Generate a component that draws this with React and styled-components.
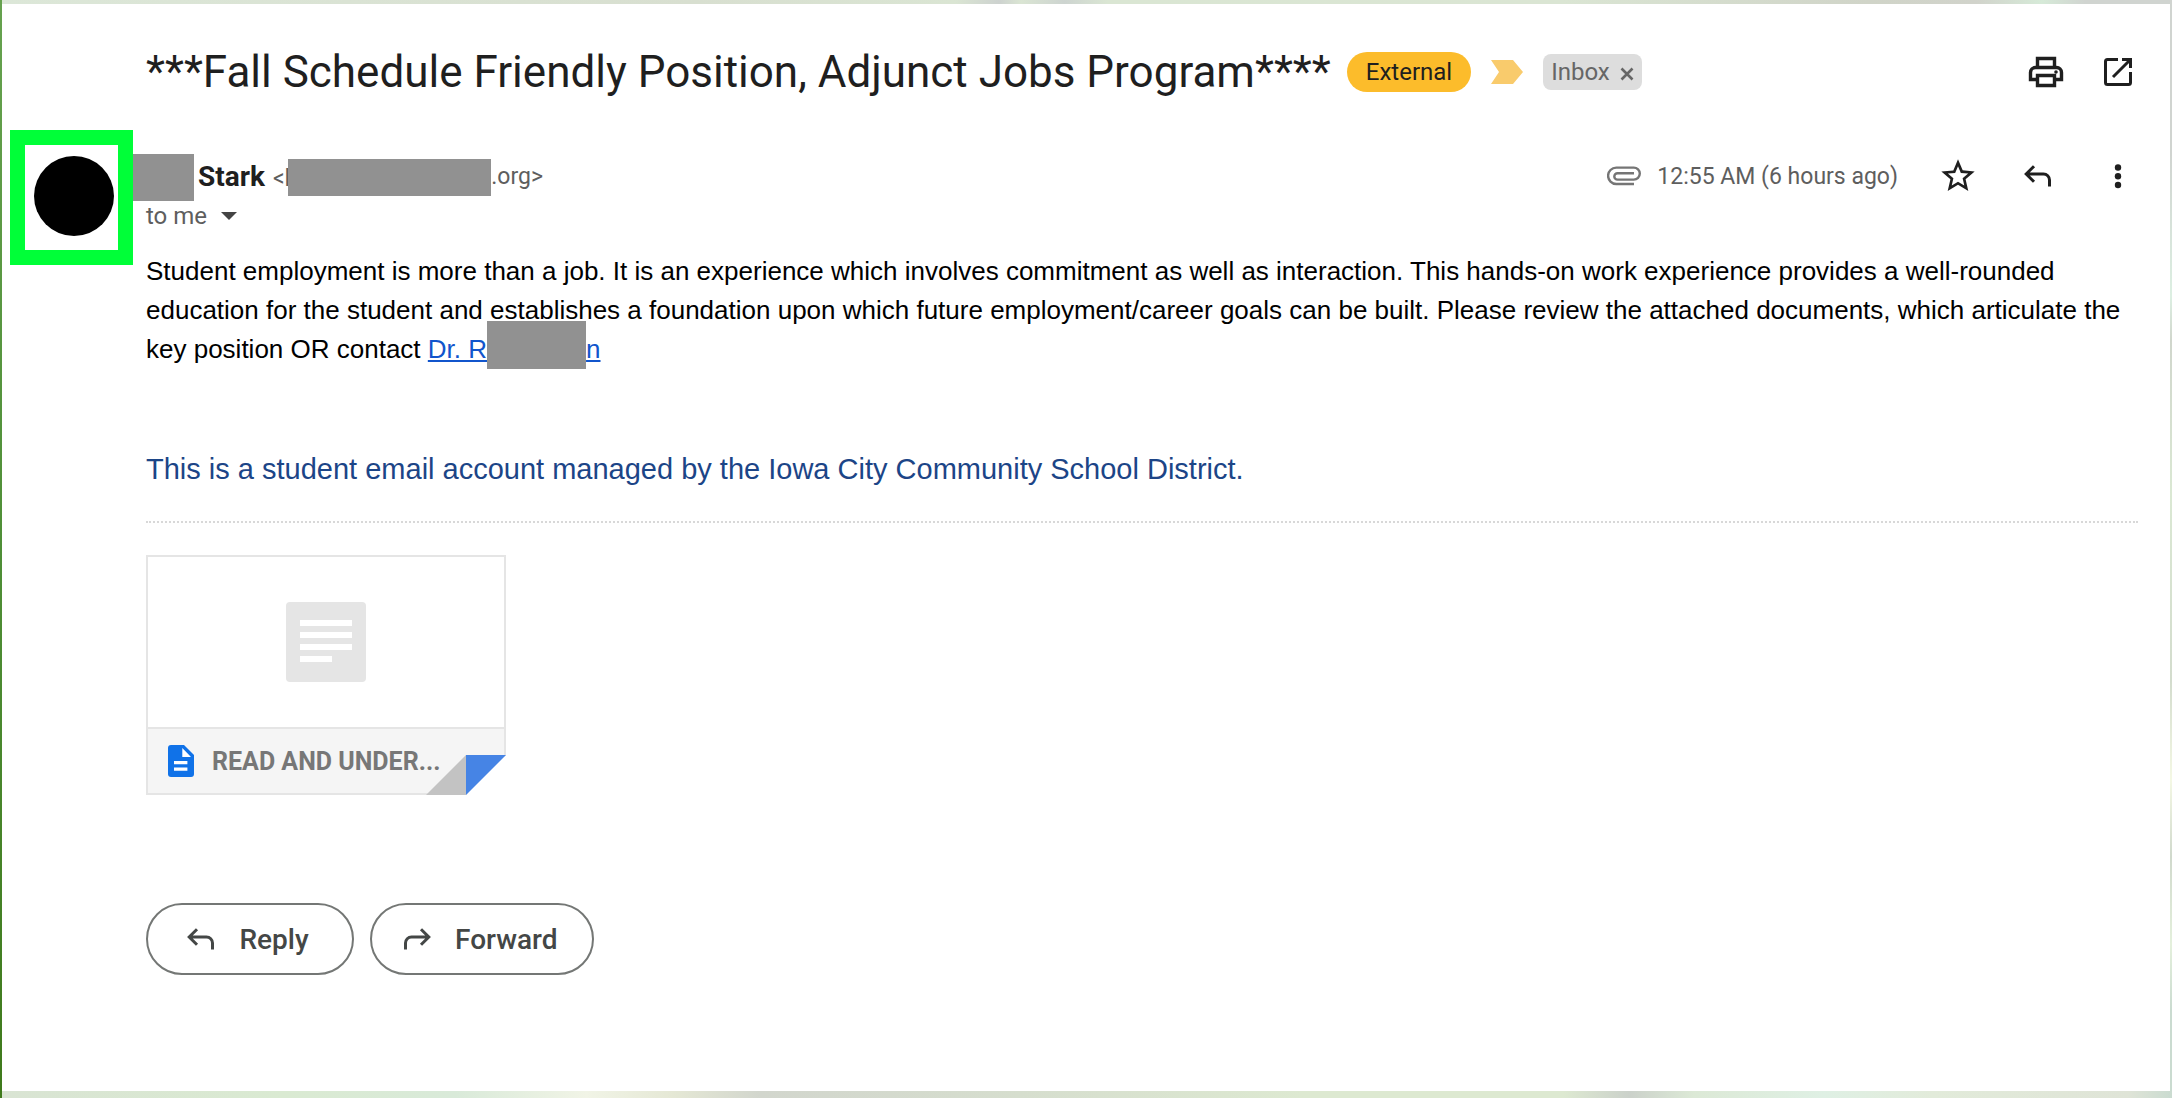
import React from "react";
import styled, { createGlobalStyle } from "styled-components";

const PrintIcon = () => (
  <svg width="40" height="40" viewBox="0 0 40 40" fill="none" stroke="currentColor" strokeWidth="3.4">
    <path d="M11.5 15V6.5h17V15" />
    <path d="M11 27.5H4.5v-7a5 5 0 0 1 5-5h21a5 5 0 0 1 5 5v7H29" />
    <path d="M11.5 23.5h17v10h-17z" />
    <circle cx="30" cy="20" r="1.8" fill="currentColor" stroke="none" />
  </svg>
);

const OpenIcon = () => (
  <svg width="40" height="40" viewBox="0 0 40 40" fill="none" stroke="currentColor" strokeWidth="3">
    <path d="M20 7.5H9.5a2 2 0 0 0-2 2v21a2 2 0 0 0 2 2h21a2 2 0 0 0 2-2V20" />
    <path d="M24 7.5h8.5V16M32 8 15 25" />
  </svg>
);

const StarIcon = () => (
  <svg width="40" height="40" viewBox="0 0 24 24" fill="currentColor">
    <path d="M22 9.24l-7.19-.62L12 2 9.19 8.63 2 9.24l5.46 4.73L5.82 21 12 17.27 18.18 21l-1.63-7.03L22 9.24zM12 15.4l-3.76 2.27 1-4.28-3.32-2.88 4.38-.38L12 6.1l1.71 4.04 4.38.38-3.32 2.88 1 4.28L12 15.4z" />
  </svg>
);

const ReplyIcon = ({ flip }) => (
  <svg width="28" height="22" viewBox="0 0 28 22" fill="none" stroke="currentColor" strokeWidth="3">
    <path
      transform={flip ? "translate(28 0) scale(-1 1)" : undefined}
      d="M10 1.2 2.2 9 10 16.8M2.5 9h17a6 6 0 0 1 6 6v6.5"
    />
  </svg>
);

const MoreIcon = () => (
  <svg width="40" height="40" viewBox="0 0 40 40" fill="currentColor">
    <circle cx="20" cy="11.5" r="3.2" />
    <circle cx="20" cy="20.2" r="3.2" />
    <circle cx="20" cy="29" r="3.2" />
  </svg>
);

const ClipIcon = () => (
  <svg width="34" height="20" viewBox="0 0 34 20" fill="none" stroke="#757575" strokeWidth="2.4">
    <path d="M27 18H9.3a8.2 8.2 0 0 1 0-16.4h17.5a6 6 0 0 1 0 12H10.5a3.2 3.2 0 0 1 0-6.4H27" />
  </svg>
);

const DocIcon = () => (
  <svg width="26" height="32" viewBox="0 0 26 32">
    <path fill="#1072e8" d="M3 0h13l10 10v19a3 3 0 0 1-3 3H3a3 3 0 0 1-3-3V3a3 3 0 0 1 3-3z" />
    <path fill="#fff" d="M14.3 3v9H23zM6 16h13.4v3.2H6zM6 22.4h13.4v3.4H6z" />
  </svg>
);

const PreviewIcon = () => (
  <svg width="80" height="80" viewBox="0 0 80 80">
    <rect width="80" height="80" rx="4" fill="#e5e5e5" />
    <path fill="#fff" d="M14 18h52v6H14zM14 30h52v6H14zM14 42h52v6H14zM14 54h32v6H14z" />
  </svg>
);

const App = () => {
  return (
    <>
      <GlobalStyle />
      <Frame>
        <Message>
          <SubjectRow>
            <Subject>***Fall Schedule Friendly Position, Adjunct Jobs Program****</Subject>
            <External>External</External>
            <svg width="32" height="24" viewBox="0 0 32 24" aria-label="Important">
              <path d="M0 0h22l10 12-10 12H0l8-12z" fill="#f9cb6c" />
            </svg>
            <Label>
              Inbox
              <LabelRemove aria-label="Remove label Inbox">
                <svg width="14" height="14" viewBox="0 0 14 14" stroke="currentColor" strokeWidth="2.6">
                  <path d="m1.5 1.5 11 11M12.5 1.5l-11 11" />
                </svg>
              </LabelRemove>
            </Label>
            <SubjectTools>
              <IconButton aria-label="Print all">
                <PrintIcon />
              </IconButton>
              <IconButton aria-label="Open in new window">
                <OpenIcon />
              </IconButton>
            </SubjectTools>
          </SubjectRow>

          <Mail>
            <AvatarBox>
              <Avatar />
            </AvatarBox>
            <Main>
              <SenderRow>
                <Redacted $w={61} $h={47} />
                <Sender>
                  <Name>Stark</Name>
                  <Address>&lt;l</Address>
                </Sender>
                <AddressRedacted $w={203} $h={37} />
                <Sender>
                  <Address>.org&gt;</Address>
                </Sender>
                <Meta>
                  <ClipIcon />
                  <Time>12:55 AM (6 hours ago)</Time>
                  <MetaTools>
                    <IconButton aria-label="Star">
                      <StarIcon />
                    </IconButton>
                    <IconButton aria-label="Reply">
                      <ReplyIcon />
                    </IconButton>
                    <IconButton aria-label="More">
                      <MoreIcon />
                    </IconButton>
                  </MetaTools>
                </Meta>
              </SenderRow>

              <Content>
                <Recipient>
                  to me
                  <svg width="16" height="8" viewBox="0 0 16 8">
                    <path d="M0 0h16L8 8z" fill="#444" />
                  </svg>
                </Recipient>
                <Body>
                  Student employment is more than a job. It is an experience which involves commitment as well as
                  interaction. This hands-on work experience provides a well-rounded education for the student and
                  establishes a foundation upon which future employment/career goals can be built. Please review the
                  attached documents, which articulate the key position OR contact{" "}
                  <Contact href="#contact">
                    Dr. R<LinkRedacted />n
                  </Contact>
                </Body>
                <Notice>This is a student email account managed by the Iowa City Community School District.</Notice>
                <Divider />
                <Attachment>
                  <Preview>
                    <PreviewIcon />
                  </Preview>
                  <FileBar>
                    <DocIcon />
                    READ AND UNDER...
                  </FileBar>
                  <Fold width="80" height="40" viewBox="0 0 80 40">
                    <path d="M80 0v40H40z" fill="#fff" />
                    <path d="M40 0v40H0z" fill="#c3c3c3" />
                    <path d="M40 0h40L40 40z" fill="#4684e5" />
                  </Fold>
                </Attachment>
                <Actions>
                  <ActionButton>
                    <ReplyIcon />
                    Reply
                  </ActionButton>
                  <ActionButton>
                    <ReplyIcon flip />
                    Forward
                  </ActionButton>
                </Actions>
              </Content>
            </Main>
          </Mail>
        </Message>
      </Frame>
    </>
  );
};

export default App;

const GlobalStyle = createGlobalStyle`
  * {
    box-sizing: border-box;
  }
  body {
    margin: 0;
    font-family: Roboto, "Liberation Sans", sans-serif;
  }
  svg {
    display: block;
    flex-shrink: 0;
  }
  button {
    font-family: inherit;
    cursor: pointer;
  }
`;

/* the wallpaper shows as a thin strip on every side of the message */
const Frame = styled.div`
  display: flex;
  min-height: 100vh;
  padding: 4px 2px 7px;
  background:
    linear-gradient(#66a24f, #4f8f37 50%, #3f7a1c) left / 2px 100% no-repeat,
    linear-gradient(
        90deg,
        #dce7d8,
        #d8dfd0 32%,
        #dae5d3 44%,
        #cdd2cf 46%,
        #dae5d3 47%,
        #cdd4d0 49%,
        #dae6d3 51%,
        #dae5d3 72%,
        #d0d4c8 86%,
        #d1d3cb 91%,
        #d6ead8 94%,
        #d0d4d0 96%
      )
      top / 100% 4px no-repeat,
    linear-gradient(
        90deg,
        #d9e4d3,
        #daead2 13%,
        #d9ead9 21%,
        #f1f4e6 27%,
        #e5e8d5 31%,
        #d2d6cd 35%,
        #d6dece 47%,
        #dde9d1 60%,
        #dde9d1 72%,
        #cbd1ca 75%,
        #dce9d6 78%,
        #dff0e4 84%,
        #e2ebda 89%,
        #dfe4d7 98%,
        #cadbd0
      )
      bottom / 100% 7px no-repeat,
    linear-gradient(#d0d4d0 14%, #dcefe2 27%, #d0d6cc 31%, #dae8d3 45%, #d3dccd 62%, #f4f8e4 71%, #d0d9cc 78%, #e4f0dc 86%, #cadbd0 92%);
`;

const Message = styled.main`
  flex: 1;
  min-width: 0;
  padding-top: 40px;
  background-color: #fff;
`;

const SubjectRow = styled.header`
  display: flex;
  align-items: center;
  gap: 20px;
  padding: 0 32px 0 144px;
`;

const Subject = styled.h1`
  margin: 0 -4px 0 0;
  font-size: 44px;
  font-weight: 400;
  line-height: 56px;
  color: #1f1f1f;
`;

const External = styled.span`
  padding: 0 19px;
  border-radius: 20px;
  background-color: #fcbc2b;
  font-size: 24px;
  line-height: 40px;
  color: #1f1f1f;
`;

const Label = styled.span`
  display: flex;
  align-items: center;
  gap: 10px;
  padding: 0 8px;
  border-radius: 8px;
  background-color: #ddd;
  font-size: 24px;
  line-height: 36px;
  color: #666;
`;

const LabelRemove = styled.button`
  padding: 4px 0 0;
  border: none;
  background: none;
  color: #666;
`;

const SubjectTools = styled.div`
  display: flex;
  gap: 32px;
  margin-left: auto;
`;

const IconButton = styled.button`
  display: flex;
  align-items: center;
  justify-content: center;
  width: 40px;
  height: 40px;
  padding: 0;
  border: none;
  background: none;
  color: #1f1f1f;
`;

const Mail = styled.article`
  display: flex;
  align-items: flex-start;
  margin-top: 30px;
  padding: 0 32px 0 8px;
`;

const AvatarBox = styled.div`
  display: flex;
  align-items: center;
  justify-content: center;
  flex-shrink: 0;
  width: 123px;
  height: 135px;
  padding: 0 0 3px 4px;
  border: 15px solid #00ff38;
`;

const Avatar = styled.div`
  flex-shrink: 0;
  width: 80px;
  height: 80px;
  border-radius: 50%;
  background-color: #000;
`;

const Main = styled.div`
  flex: 1;
  min-width: 0;
  padding-top: 24px;
`;

const SenderRow = styled.div`
  display: flex;
  align-items: center;
  height: 47px;
`;

const Redacted = styled.span`
  width: ${(props) => props.$w}px;
  height: ${(props) => props.$h}px;
  background-color: #919191;
`;

const AddressRedacted = styled(Redacted)`
  margin-left: -2px;
  z-index: 1;
`;

const Sender = styled.div`
  display: flex;
  align-items: baseline;
  gap: 8px;
  padding-bottom: 2px;
`;

const Name = styled.span`
  margin-left: 4px;
  font-size: 28px;
  font-weight: 700;
  color: #1f1f1f;
`;

const Address = styled.span`
  font-size: 23px;
  color: #5e5e5e;
`;

const Meta = styled.div`
  display: flex;
  align-items: center;
  margin-left: auto;
  padding-bottom: 3px;
`;

const Time = styled.time`
  margin: 0 40px 0 16px;
  font-size: 23px;
  color: #5e5e5e;
`;

const MetaTools = styled.div`
  display: flex;
  gap: 40px;
`;

const Content = styled.div`
  padding-left: 13px;
`;

const Recipient = styled.div`
  display: flex;
  align-items: center;
  gap: 14px;
  font-size: 24px;
  line-height: 30px;
  color: #5e5e5e;
`;

const Body = styled.p`
  margin: 21px 0 0;
  font-family: "Liberation Sans", Arial, sans-serif;
  font-size: 26px;
  line-height: 39px;
  color: #000;
`;

const Contact = styled.a`
  color: #1155cc;
`;

const LinkRedacted = styled.span`
  display: inline-block;
  width: 99px;
  height: 48px;
  margin-top: -9px;
  vertical-align: bottom;
  background-color: #919191;
`;

const Notice = styled.p`
  margin: 81px 0 0;
  font-family: "Liberation Sans", Arial, sans-serif;
  font-size: 29px;
  line-height: 39px;
  color: #1c4587;
`;

const Divider = styled.hr`
  margin: 32px 0;
  border: none;
  border-top: 2px dotted #d8d8d8;
`;

const Attachment = styled.div`
  position: relative;
  width: 360px;
  border: 2px solid #e5e5e5;
`;

const Preview = styled.div`
  display: flex;
  align-items: center;
  justify-content: center;
  height: 170px;
`;

const FileBar = styled.div`
  display: flex;
  align-items: center;
  gap: 18px;
  height: 66px;
  padding-left: 20px;
  border-top: 2px solid #e5e5e5;
  background-color: #f5f5f5;
  font-size: 25px;
  font-weight: 700;
  color: #777;
`;

const Fold = styled.svg`
  position: absolute;
  right: -2px;
  bottom: -2px;
`;

const Actions = styled.div`
  display: flex;
  gap: 16px;
  margin-top: 108px;
`;

const ActionButton = styled.button`
  display: flex;
  align-items: center;
  justify-content: center;
  gap: 24px;
  min-width: 208px;
  height: 72px;
  padding: 0 35px 0 31px;
  border: 2px solid #747775;
  border-radius: 36px;
  background-color: #fff;
  font-size: 28px;
  font-weight: 500;
  color: #444746;
`;
